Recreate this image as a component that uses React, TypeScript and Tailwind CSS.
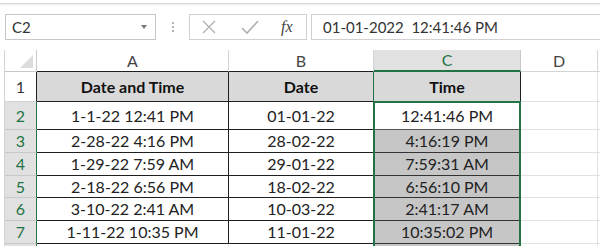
import React from 'react';

const data = [
  ['1-1-22 12:41 PM', '01-01-22', '12:41:46 PM'],
  ['2-28-22 4:16 PM', '28-02-22', '4:16:19 PM'],
  ['1-29-22 7:59 AM', '29-01-22', '7:59:31 AM'],
  ['2-18-22 6:56 PM', '18-02-22', '6:56:10 PM'],
  ['3-10-22 2:41 AM', '10-03-22', '2:41:17 AM'],
  ['1-11-22 10:35 PM', '11-01-22', '10:35:02 PM'],
];

const cell = 'flex items-center justify-center overflow-hidden whitespace-nowrap';

function FormulaBar() {
  return (
    <div className="mt-[10px] flex h-[26px] items-stretch pl-[5px]">
      <div className="relative flex w-[151px] items-center border border-[#c6c6c6] bg-white pl-[6px] text-[15px] text-[#333]">
        C2
        <span className="absolute right-[8px] top-[10px] h-0 w-0 border-x-[3.5px] border-t-[4px] border-x-transparent border-t-[#777]" />
      </div>
      <div className="flex w-[33px] flex-col items-center justify-center gap-[2px]">
        <span className="h-[2px] w-[2px] rounded-full bg-[#9a9a9a]" />
        <span className="h-[2px] w-[2px] rounded-full bg-[#9a9a9a]" />
        <span className="h-[2px] w-[2px] rounded-full bg-[#9a9a9a]" />
      </div>
      <div className="flex w-[118px] items-center border border-[#d0d0d0] bg-white">
        <svg width="40" height="24" viewBox="0 0 40 24" className="text-[#b0b0b0]">
          <path d="M13 6 L25 18 M25 6 L13 18" stroke="currentColor" strokeWidth="1.3" fill="none" />
        </svg>
        <svg width="40" height="24" viewBox="0 0 40 24" className="text-[#b0b0b0]">
          <path d="M12 13 L17 18 L28 6" stroke="currentColor" strokeWidth="1.6" fill="none" />
        </svg>
        <span className="ml-[11px] text-[16px] italic text-[#444]" style={{ fontFamily: '"Liberation Serif", serif' }}>
          fx
        </span>
      </div>
      <div className="ml-[4px] flex flex-1 items-center border border-r-0 border-[#d0d0d0] bg-white pl-[11px] text-[15px] text-[#333] whitespace-pre">
        01-01-2022  12:41:46 PM
      </div>
    </div>
  );
}

export default function App() {
  return (
    <div
      className="relative h-[246px] w-[600px] overflow-hidden bg-white"
      style={{ fontFamily: 'Lato, "Open Sans", sans-serif' }}
    >
      <div className="h-[4px] border-b border-[#d8d8d8] shadow-[0_1px_2px_rgba(0,0,0,0.08)]" />
      <FormulaBar />

      <div className="ml-[4px] mt-[10px] grid grid-cols-[32px_192px_145px_147px_77px_1fr] grid-rows-[22px_30px_28px_23px_23px_22px_23px_23px_20px] border-l border-[#d4d4d4]">
        {/* column headers */}
        <div className="relative border-b border-r border-[#c8c8c8] bg-white">
          <span className="absolute bottom-[3px] right-[3px] h-0 w-0 border-b-[13px] border-l-[13px] border-b-[#dcdcdc] border-l-transparent" />
        </div>
        <div className={`${cell} border-b border-r border-b-[#1f1f1f] border-r-[#d4d4d4] bg-white text-[16px] text-[#444]`}>A</div>
        <div className={`${cell} border-b border-r border-b-[#1f1f1f] border-r-[#d4d4d4] bg-white text-[16px] text-[#444]`}>B</div>
        <div className={`${cell} border-b-2 border-r border-b-[#217346] border-r-[#c8c8c8] bg-[#e1e1e1] text-[16px] text-[#217346]`}>C</div>
        <div className={`${cell} border-b border-r border-[#d4d4d4] bg-white text-[16px] text-[#444]`}>D</div>
        <div className="border-b border-[#d4d4d4]" />

        {/* row 1 */}
        <div className={`${cell} border-b border-r border-b-[#d4d4d4] border-r-[#1f1f1f] bg-white text-[16px] text-[#333]`}>1</div>
        <div className={`${cell} border-b border-r border-[#1f1f1f] bg-[#d9d9d9] text-[16px] font-bold text-[#111]`}>Date and Time</div>
        <div className={`${cell} border-b border-r border-b-[#1f1f1f] border-r-[#217346] bg-[#d9d9d9] text-[16px] font-bold text-[#111]`}>Date</div>
        <div className={`${cell} border-b border-r border-[#1f1f1f] bg-[#d9d9d9] text-[16px] font-bold text-[#111]`}>Time</div>
        <div className="border-b border-r border-[#e1e1e1]" />
        <div className="border-b border-[#e1e1e1]" />

        {data.map((r, i) => (
          <React.Fragment key={i}>
            <div className={`${cell} border-b border-r border-b-[#c8c8c8] border-r-[#217346] bg-[#e1e1e1] text-[16px] text-[#217346]`}>
              {i + 2}
            </div>
            <div className={`${cell} border-b border-r border-[#1f1f1f] bg-white text-[16px] text-[#222]`}>{r[0]}</div>
            <div className={`${cell} border-b border-r border-[#1f1f1f] bg-white text-[16px] text-[#222]`}>{r[1]}</div>
            <div
              className={
                i === 0
                  ? `${cell} border-b border-r border-[#555] bg-white text-[16px] text-[#222]`
                  : `${cell} border-b border-r border-[#333] bg-[#c6c6c6] text-[16px] text-[#222]`
              }
            >
              {r[2]}
            </div>
            <div className="border-b border-r border-[#e1e1e1]" />
            <div className="border-b border-[#e1e1e1]" />
          </React.Fragment>
        ))}

        {/* row 8, only its top edge is in view */}
        <div className="border-r border-r-[#217346] bg-[#e1e1e1]" />
        <div className="border-r border-[#e1e1e1] bg-white" />
        <div className="border-r border-[#e1e1e1] bg-white" />
        <div className="border-r border-[#e1e1e1] bg-[#c6c6c6]" />
        <div className="border-r border-[#e1e1e1]" />
        <div />
      </div>

      {/* selection outline */}
      <div className="pointer-events-none absolute left-[373px] top-[101px] h-[160px] w-[148px] border-2 border-[#217346]" />
    </div>
  );
}
